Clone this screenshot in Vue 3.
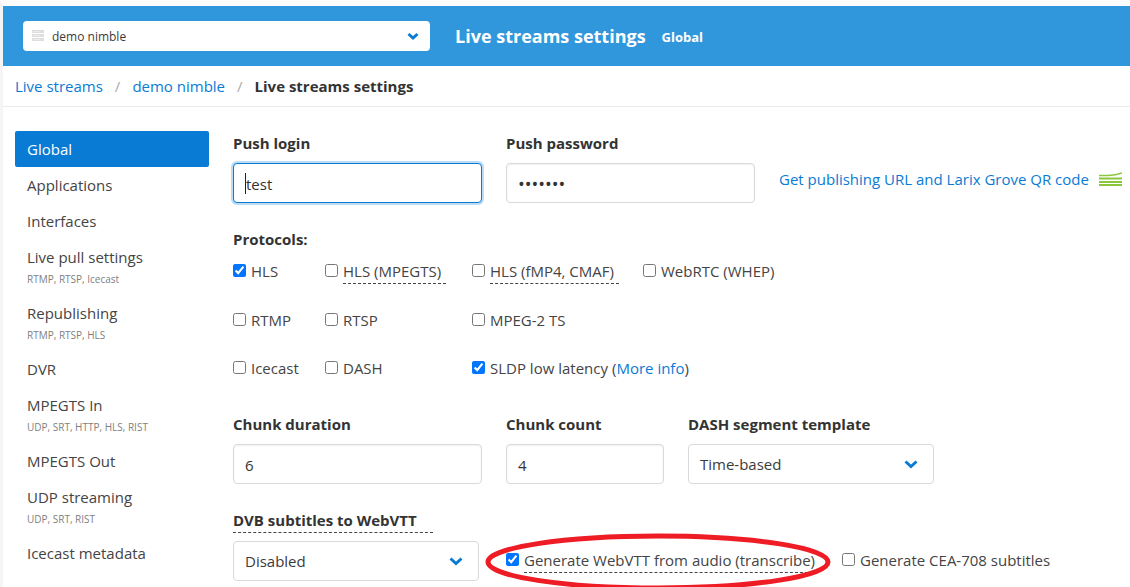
<script setup>
import { ref } from 'vue'

const server = ref('demo nimble')
const login = ref('test')
const password = ref('secret7')
const duration = ref('6')
const count = ref('4')
const template = ref('Time-based')
const dvb = ref('Disabled')
const transcribe = ref(true)
const cea = ref(false)

const menu = [
  { name: 'Global', active: true },
  { name: 'Applications' },
  { name: 'Interfaces' },
  { name: 'Live pull settings', note: 'RTMP, RTSP, Icecast' },
  { name: 'Republishing', note: 'RTMP, RTSP, HLS' },
  { name: 'DVR' },
  { name: 'MPEGTS In', note: 'UDP, SRT, HTTP, HLS, RIST' },
  { name: 'MPEGTS Out' },
  { name: 'UDP streaming', note: 'UDP, SRT, RIST' },
  { name: 'Icecast metadata' }
]

const protocols = ref([
  { id: 'hls', name: 'HLS', on: true },
  { id: 'hls-ts', name: 'HLS (MPEGTS)', hint: true },
  { id: 'hls-fmp4', name: 'HLS (fMP4, CMAF)', hint: true },
  { id: 'webrtc', name: 'WebRTC (WHEP)' },
  { id: 'rtmp', name: 'RTMP' },
  { id: 'rtsp', name: 'RTSP' },
  { id: 'mpeg2', name: 'MPEG-2 TS', last: true },
  { id: 'icecast', name: 'Icecast' },
  { id: 'dash', name: 'DASH' },
  { id: 'sldp', name: 'SLDP low latency', link: true, on: true, last: true }
])
</script>

<template>
  <div class="page">
    <header class="top">
      <div class="pick server">
        <svg class="server-icon" width="12" height="11" viewBox="0 0 12 11" aria-hidden="true">
          <path d="M0 0h12v3H0zM0 4h12v3H0zM0 8h12v3H0z" fill="#dedede" />
          <path d="M1 1.500h7M1 5.500h7M1 9.500h7" stroke="#ececec" />
        </svg>
        <select v-model="server" aria-label="Server">
          <option>demo nimble</option>
        </select>
        <svg class="chevron" width="14" height="9" viewBox="0 0 14 9" aria-hidden="true">
          <path d="M2.500 2l4.500 4 4.500-4" />
        </svg>
      </div>
      <h1>Live streams settings</h1>
      <span class="section">Global</span>
    </header>

    <nav class="crumbs" aria-label="Breadcrumb">
      <a href="#streams">Live streams</a>
      <span class="slash">/</span>
      <a href="#server">demo nimble</a>
      <span class="slash">/</span>
      <strong>Live streams settings</strong>
    </nav>

    <div class="body">
      <nav class="menu" aria-label="Settings">
        <a v-for="m in menu" :key="m.name" href="#settings" :class="{ active: m.active }">
          {{ m.name }}
          <small v-if="m.note">{{ m.note }}</small>
        </a>
      </nav>

      <form class="form" @submit.prevent>
        <div class="row access">
          <div class="field">
            <label for="login">Push login</label>
            <div class="box">
              <input id="login" v-model="login" class="text focused" type="text" />
              <span class="caret"></span>
            </div>
          </div>
          <div class="field">
            <label for="password">Push password</label>
            <input id="password" v-model="password" class="text secret" type="password" />
          </div>
          <a class="publish" href="#publish">
            Get publishing URL and Larix Grove QR code
            <svg width="23" height="15" viewBox="0 0 23 15" aria-hidden="true">
              <path d="M0 3.500h9Q17 3.500 23 1" fill="none" stroke="#8cc63f" stroke-width="1.500" />
              <path d="M0 6.500h23M0 10h23M0 13h23" stroke="#8cc63f" stroke-width="1.800" />
            </svg>
          </a>
        </div>

        <fieldset class="protocols">
          <legend>Protocols:</legend>
          <div class="grid">
            <div v-for="p in protocols" :key="p.id" class="check" :class="{ last: p.last }">
              <input :id="p.id" v-model="p.on" type="checkbox" />
              <label :for="p.id" :class="{ hint: p.hint }">{{ p.name }}</label>
              <span v-if="p.link" class="more">(<a href="#sldp">More info</a>)</span>
            </div>
          </div>
        </fieldset>

        <div class="row chunks">
          <div class="field">
            <label for="duration">Chunk duration</label>
            <input id="duration" v-model="duration" class="text" type="text" />
          </div>
          <div class="field">
            <label for="count">Chunk count</label>
            <input id="count" v-model="count" class="text" type="text" />
          </div>
          <div class="field">
            <label for="template">DASH segment template</label>
            <div class="pick">
              <select id="template" v-model="template"><option>Time-based</option></select>
              <svg class="chevron" width="14" height="9" viewBox="0 0 14 9" aria-hidden="true">
                <path d="M1.500 1.500l5.500 5 5.500-5" />
              </svg>
            </div>
          </div>
        </div>

        <div class="row subtitles">
          <div class="field dvb">
            <label for="dvb" class="hint">DVB subtitles to WebVTT</label>
            <div class="pick">
              <select id="dvb" v-model="dvb"><option>Disabled</option></select>
              <svg class="chevron" width="14" height="9" viewBox="0 0 14 9" aria-hidden="true">
                <path d="M1.500 1.500l5.500 5 5.500-5" />
              </svg>
            </div>
          </div>
          <div class="extras">
            <div class="check circled">
              <input id="transcribe" v-model="transcribe" type="checkbox" />
              <label for="transcribe" class="hint">Generate WebVTT from audio (transcribe)</label>
              <svg class="ring" viewBox="0 0 346 58" preserveAspectRatio="none" aria-hidden="true">
                <ellipse cx="173" cy="29" rx="170" ry="26" />
              </svg>
            </div>
            <div class="check">
              <input id="cea" v-model="cea" type="checkbox" />
              <label for="cea">Generate CEA-708 subtitles</label>
            </div>
          </div>
        </div>
      </form>
    </div>
  </div>
</template>

<style>
body {
  margin: 0;
  background: #fff;
}
</style>

<style scoped>
.page,
.page * {
  box-sizing: border-box;
}
.page {
  min-height: 100vh;
  overflow: hidden;
  border-top: 6px solid #fcfcfc;
  border-left: 3px solid #f5f5f5;
  background: #fff;
  color: #444;
  font: 15px/24px "Open Sans", "Noto Sans", sans-serif;
}
a {
  color: #0a7bd4;
  text-decoration: none;
}
.top {
  display: flex;
  align-items: center;
  height: 60px;
  padding: 0 20px;
  background: #3197dc;
  color: #fff;
}
h1 {
  margin: 0 16px 0 25px;
  font-size: 18px;
  line-height: 28px;
  white-space: nowrap;
}
.section {
  padding-top: 2px;
  font-size: 13px;
  font-weight: 700;
}
.pick {
  position: relative;
}
.pick select {
  display: block;
  width: 100%;
  height: 40px;
  padding: 0 11px;
  border: 1px solid #d9d9d9;
  border-radius: 4px;
  background: #fff;
  color: #3b3b3b;
  font: inherit;
  appearance: none;
}
.chevron {
  position: absolute;
  top: 16px;
  right: 16px;
  fill: none;
  stroke: #0a7bd4;
  stroke-width: 3;
  pointer-events: none;
}
.server {
  flex: 0 1 407px;
}
.server select {
  height: 30px;
  padding: 2px 29px 0;
  border: 0;
  font-size: 12px;
}
.server .chevron {
  top: 11px;
  right: 10px;
}
.server-icon {
  position: absolute;
  top: 9px;
  left: 9px;
}
.crumbs {
  display: flex;
  gap: 12px;
  height: 41px;
  padding: 8px 12px;
  border-bottom: 1px solid #ebebeb;
  white-space: nowrap;
}
.crumbs strong {
  color: #333;
}
.slash {
  color: #aaa;
}
.body {
  display: flex;
  gap: 24px;
  padding: 24px 0 0 12px;
}
.menu {
  flex: 0 0 194px;
}
.menu a {
  display: block;
  padding: 6px 12px;
  border-radius: 2px;
  color: #444;
}
.menu a.active {
  background: #0a7bd4;
  color: #fff;
}
.menu small {
  display: block;
  color: #808080;
  font-size: 10px;
  line-height: 20px;
}
.form {
  flex: 1;
  min-width: 0;
}
.row {
  display: grid;
  column-gap: 24px;
}
.access {
  grid-template-columns: minmax(0, 249fr) minmax(0, 249fr) minmax(0, 351fr);
}
.chunks {
  grid-template-columns: minmax(0, 249fr) minmax(0, 158fr) minmax(0, 246fr) minmax(0, 172fr);
  margin-top: 32px;
}
.subtitles {
  grid-template-columns: minmax(0, 249fr) minmax(0, 624fr);
  align-items: end;
  margin-top: 24px;
}
.field > label,
legend {
  display: block;
  margin-bottom: 8px;
  padding: 0;
  color: #333;
  font-weight: 700;
}
.text {
  display: block;
  width: 100%;
  height: 40px;
  padding: 2px 11px 0;
  border: 1px solid #d9d9d9;
  border-radius: 4px;
  box-shadow: inset 0 1px 2px #f0f0f0;
  color: #333;
  font: inherit;
}
.text.focused {
  padding-left: 12px;
  border-color: #0a7bd4;
  box-shadow: 0 0 0 2px #bcdcf5;
}
.text.secret {
  font-size: 18px;
}
.box {
  position: relative;
}
.caret {
  position: absolute;
  top: 10px;
  left: 12px;
  width: 1px;
  height: 21px;
  background: #222;
}
.publish {
  align-self: end;
  margin-bottom: 12px;
  white-space: nowrap;
}
.publish svg {
  margin-left: 6px;
  vertical-align: -2px;
}
.protocols {
  margin: 24px 0 0;
  padding: 0;
  border: 0;
}
.grid {
  display: grid;
  grid-template-columns: 92px 147px 171px 1fr;
  row-gap: 24px;
}
.check {
  display: flex;
  align-items: flex-start;
  white-space: nowrap;
}
.check.last {
  grid-column: 3 / 5;
}
.check input {
  width: 13px;
  height: 13px;
  margin: 5px 5px 0 0;
}
.hint {
  padding-right: 5px;
  border-bottom: 1px dashed #444;
}
.more {
  margin-left: 4px;
}
.dvb > label {
  width: fit-content;
  padding-right: 16px;
}
.dvb .pick {
  max-width: 246px;
}
.extras {
  display: flex;
  gap: 24px;
  padding-bottom: 8px;
}
.circled {
  position: relative;
}
.circled .hint {
  padding-right: 3px;
}
.ring {
  position: absolute;
  top: -15px;
  left: -21px;
  width: calc(100% + 34px);
  height: 58px;
  overflow: visible;
  fill: none;
  stroke: #ee1c25;
  stroke-width: 5;
  pointer-events: none;
}
</style>
